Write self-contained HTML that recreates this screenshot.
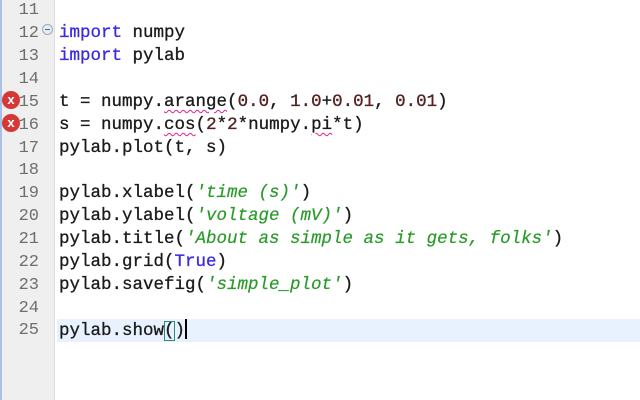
<!DOCTYPE html>
<html><head><style>
body{margin:0;width:640px;height:400px;overflow:hidden;background:#fff;position:relative;font-family:"Liberation Mono",monospace;}
.gut{position:absolute;left:0;top:0;width:54px;height:400px;background:#efefef;border-left:2px solid #a9c1e6;box-sizing:border-box;}
.sep{position:absolute;left:54px;top:0;width:1px;height:400px;background:#dcdcdc;}
.hl{position:absolute;left:57px;top:319px;width:583px;height:23px;background:#e8f2fe;}
.ln{position:absolute;left:0;width:39px;text-align:right;color:#6e6e6e;font-size:17px;line-height:23px;height:23px;}
.cd{position:absolute;left:59px;font-size:17.5px;line-height:23px;height:23px;white-space:pre;color:#1a1a1a;-webkit-text-stroke:0.3px #1a1a1a;}
.k{color:#3a2be0;-webkit-text-stroke:0.3px #3a2be0}.s{color:#2a9a2a;font-style:italic;-webkit-text-stroke:0.2px #2a9a2a}.n{color:#6a1a1a}
.sq{text-decoration:underline wavy #e0208c;text-decoration-thickness:1px;text-underline-offset:3px}
.err{position:absolute;left:2px;width:18px;height:18px;border-radius:50%;background:#d63838;color:#fff;font:bold 13px/18px "Liberation Sans",sans-serif;text-align:center;}
.fold{position:absolute;left:42px;top:24px;width:11px;height:11px;border-radius:50%;border:1px solid #9ab;background:#e4ecf4;box-sizing:border-box;}
.fold:after{content:"";position:absolute;left:2px;top:4px;width:5px;height:1px;background:#567;}
.br{outline:1.5px solid #2f8a7a;outline-offset:-1px}
.cur{display:inline-block;width:2px;height:20px;background:#000;vertical-align:-4px}
</style></head><body>
<div class="gut"></div><div class="sep"></div><div class="hl"></div>
<div class="fold"></div>
<div class="err" style="top:91px">x</div>
<div class="err" style="top:114px">x</div>
<div class="ln" style="top:-1px">11</div>
<div class="ln" style="top:22px">12</div>
<div class="ln" style="top:45px">13</div>
<div class="ln" style="top:68px">14</div>
<div class="ln" style="top:91px">15</div>
<div class="ln" style="top:114px">16</div>
<div class="ln" style="top:137px">17</div>
<div class="ln" style="top:159px">18</div>
<div class="ln" style="top:182px">19</div>
<div class="ln" style="top:205px">20</div>
<div class="ln" style="top:228px">21</div>
<div class="ln" style="top:251px">22</div>
<div class="ln" style="top:274px">23</div>
<div class="ln" style="top:297px">24</div>
<div class="ln" style="top:319px">25</div>
<div class="cd" style="top:22px"><span class="k">import</span> numpy</div>
<div class="cd" style="top:45px"><span class="k">import</span> pylab</div>
<div class="cd" style="top:91px">t = numpy.<span class="sq">arange</span>(<span class="n">0.0</span>, <span class="n">1.0</span>+<span class="n">0.01</span>, <span class="n">0.01</span>)</div>
<div class="cd" style="top:114px">s = numpy.<span class="sq">cos</span>(<span class="n">2</span>*<span class="n">2</span>*numpy.<span class="sq">pi</span>*t)</div>
<div class="cd" style="top:137px">pylab.plot(t, s)</div>
<div class="cd" style="top:182px">pylab.xlabel(<span class="s">'time (s)'</span>)</div>
<div class="cd" style="top:205px">pylab.ylabel(<span class="s">'voltage (mV)'</span>)</div>
<div class="cd" style="top:228px">pylab.title(<span class="s">'About as simple as it gets, folks'</span>)</div>
<div class="cd" style="top:251px">pylab.grid(<span class="k">True</span>)</div>
<div class="cd" style="top:274px">pylab.savefig(<span class="s">'simple_plot'</span>)</div>
<div class="cd" style="top:319px">pylab.show<span class="br">(</span>)<span class="cur"></span></div>
</body></html>
